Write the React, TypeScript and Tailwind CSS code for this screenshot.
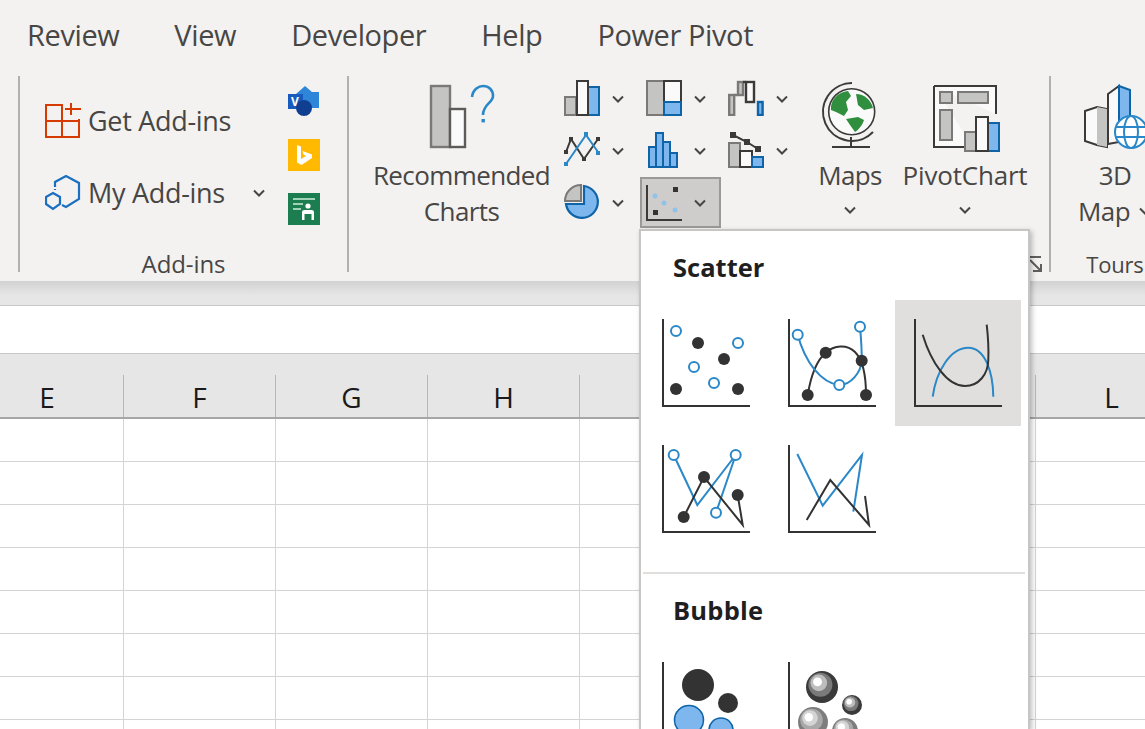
import React from "react";

const BLUE = "#2b88c8";
const DARK = "#333333";
const FILL = "#7db7ee";
const EDGE = "#0f64a8";
const GRAYF = "#c4c4c2";
const GRAYE = "#7a7978";
const INK = "#3b3a39";

function Chevron({ className = "" }: { className?: string }) {
  return (
    <svg width="14" height="9" viewBox="0 0 14 9" className={className}>
      <path d="M2 1.5 L7 6.5 L12 1.5" fill="none" stroke="#484644" strokeWidth="2" />
    </svg>
  );
}

function I36({ children }: { children: React.ReactNode }) {
  return (
    <svg width="36" height="36" viewBox="0 0 36 36" className="shrink-0">
      {children}
    </svg>
  );
}

const R = ({ x, y, w, h, f, s }: { x: number; y: number; w: number; h: number; f: string; s: string }) => (
  <rect x={x} y={y} width={w} height={h} fill={f} stroke={s} strokeWidth="2" />
);

const icons: Record<string, React.ReactNode> = {
  column: (
    <I36>
      <R x={1} y={17} w={11} h={18} f={GRAYF} s={GRAYE} />
      <R x={24} y={7} w={11} h={28} f={FILL} s={EDGE} />
      <R x={13} y={1} w={11} h={34} f="#fafafa" s={INK} />
    </I36>
  ),
  tree: (
    <I36>
      <R x={1} y={1} w={17} h={34} f={GRAYF} s={GRAYE} />
      <R x={18} y={1} w={17} h={22} f="#fafafa" s={INK} />
      <R x={18} y={22} w={17} h={13} f={FILL} s={EDGE} />
    </I36>
  ),
  water: (
    <I36>
      <path d="M6 15 H10" stroke={GRAYE} strokeWidth="2.4" />
      <rect x="1.2" y="15" width="5" height="20" fill={GRAYF} stroke={GRAYE} strokeWidth="2.4" />
      <rect x="10" y="2" width="5" height="13" fill={GRAYF} stroke={GRAYE} strokeWidth="2.4" />
      <path d="M15 2 H18" stroke={INK} strokeWidth="2.4" />
      <rect x="18" y="2" width="8" height="20" fill="#fafafa" stroke={INK} strokeWidth="2.4" />
      <rect x="30" y="22" width="4.6" height="13" fill={FILL} stroke={EDGE} strokeWidth="2.4" />
    </I36>
  ),
  line: (
    <I36>
      <path d="M2 20 L7 7 L20 27 L34 7" fill="none" stroke={INK} strokeWidth="2" />
      <path d="M2 32 L22 3 L34 20" fill="none" stroke={BLUE} strokeWidth="2" />
      <rect x="0" y="18" width="4" height="4" fill={INK} />
      <rect x="5" y="5" width="4" height="4" fill={INK} />
      <rect x="18" y="25" width="4" height="4" fill={INK} />
      <rect x="32" y="5" width="4" height="4" fill={INK} />
      <rect x="0" y="30" width="4" height="4" fill={BLUE} />
      <rect x="20" y="0" width="4" height="4" fill={BLUE} />
      <rect x="32" y="19" width="4" height="4" fill={BLUE} />
    </I36>
  ),
  hist: (
    <I36>
      <R x={3} y={15} w={7} h={20} f={FILL} s={EDGE} />
      <R x={10} y={1} w={7} h={34} f={FILL} s={EDGE} />
      <R x={17} y={10} w={7} h={25} f={FILL} s={EDGE} />
      <R x={24} y={21} w={7} h={14} f={FILL} s={EDGE} />
    </I36>
  ),
  combo: (
    <I36>
      <R x={1} y={11} w={11} h={24} f={GRAYF} s={GRAYE} />
      <R x={12} y={19} w={12} h={16} f="#fafafa" s={INK} />
      <R x={24} y={25} w={11} h={10} f={FILL} s={EDGE} />
      <path d="M5 3 L19 10 L30 17" fill="none" stroke={INK} strokeWidth="2" />
      <rect x="2" y="0" width="6" height="6" fill={INK} />
      <rect x="16" y="7" width="6" height="6" fill={INK} />
      <rect x="27" y="14" width="6" height="6" fill={INK} />
    </I36>
  ),
  pie: (
    <I36>
      <path d="M20 2 A16 16 0 1 1 2 20 H20 Z" fill={FILL} stroke={EDGE} strokeWidth="2.2" />
      <path d="M17 1 A16 16 0 0 0 1 17 H17 Z" fill={GRAYF} stroke={GRAYE} strokeWidth="2" />
    </I36>
  ),
  scatter: (
    <I36>
      <path d="M1 0 V35 H36" fill="none" stroke={INK} strokeWidth="2" />
      <rect x="27" y="2" width="5" height="5" fill={DARK} />
      <rect x="7" y="25" width="5" height="5" fill={DARK} />
      <circle cx="9" cy="11" r="2.5" fill="#8fc3ea" />
      <circle cx="18" cy="18" r="2.5" fill="#8fc3ea" />
      <circle cx="29" cy="25" r="2.5" fill="#8fc3ea" />
    </I36>
  ),
};

const chartRows = [
  ["column", "tree", "water"],
  ["line", "hist", "combo"],
  ["pie", "scatter", ""],
];

function Axis() {
  return <path d="M20 19 V106 H107" fill="none" stroke={DARK} strokeWidth="2" />;
}
const Open = ({ x, y }: { x: number; y: number }) => (
  <circle cx={x} cy={y} r="5" fill="#fff" stroke={BLUE} strokeWidth="2" />
);
const Solid = ({ x, y }: { x: number; y: number }) => <circle cx={x} cy={y} r="6" fill={DARK} />;

function G({ children }: { children: React.ReactNode }) {
  return (
    <svg width="126" height="126" viewBox="0 0 126 126">
      {children}
    </svg>
  );
}

function Sphere({ x, y, r, tone }: { x: number; y: number; r: number; tone: string[] }) {
  return (
    <g>
      <circle cx={x} cy={y} r={r} fill={tone[0]} />
      <circle cx={x - r * 0.1} cy={y - r * 0.14} r={r * 0.75} fill={tone[1]} />
      <circle cx={x - r * 0.2} cy={y - r * 0.26} r={r * 0.52} fill={tone[2]} />
      <circle cx={x - r * 0.28} cy={y - r * 0.32} r={r * 0.28} fill="#ffffff" />
    </g>
  );
}

export default function App() {
  const face = "font-['Open_Sans',sans-serif]";
  return (
    <div className={`relative flex h-[729px] w-[1145px] flex-col overflow-hidden bg-white text-[#484644] ${face}`}>
      {/* Tabs */}
      <div className="flex h-[70px] shrink-0 items-center gap-[55px] bg-[#f3f2f1] pl-[27px] text-[29px] tracking-[-0.4px]">
        <span>Review</span>
        <span>View</span>
        <span>Developer</span>
        <span>Help</span>
        <span>Power Pivot</span>
      </div>

      {/* Ribbon */}
      <div className="flex h-[211px] shrink-0 overflow-hidden bg-[#f3f2f1] pl-[18px] text-[26px] tracking-[-0.6px]">
        <div className="mt-[6px] h-[196px] w-[2px] shrink-0 bg-[#b3b0ad]" />

        {/* Add-ins group */}
        <div className="flex w-[327px] shrink-0 flex-col pt-[2px]">
          <div className="flex h-[178px] pl-[25px]">
            <div className="flex w-[221px] flex-col pt-[13px] text-[27px] tracking-[-0.3px]">
              <div className="flex h-[72px] items-center gap-[7px]">
                <svg width="36" height="36" viewBox="0 0 36 36" className="shrink-0">
                  <path d="M1 2 H17 V34 H1 Z M1 18 H34 V34 H17 M26 0 V12 M20 6 H36 M34 16 V34" fill="none" stroke="#d83b01" strokeWidth="2" />
                </svg>
                <span>Get Add-ins</span>
              </div>
              <div className="flex h-[72px] items-center justify-between">
                <div className="flex items-center gap-[7px]">
                  <svg width="36" height="36" viewBox="0 0 36 36" className="shrink-0">
                    <path d="M10 12 L10 7 L21 1 L34 8 V24 L21 32 L17 30 M10 14 V15" fill="none" stroke="#1a6fc0" strokeWidth="2.2" />
                    <path d="M8 18 L15 22 V29 L8 34 L1 29 V22 Z" fill="none" stroke="#1a6fc0" strokeWidth="2.2" />
                  </svg>
                  <span>My Add-ins</span>
                </div>
                <Chevron />
              </div>
            </div>
            <div className="ml-[22px] flex flex-col gap-[22px] pt-[13px]">
              <svg width="32" height="32" viewBox="0 0 32 32">
                <path d="M8 9 L17 1 L24 7 H31 V23 H20 L8 14 Z" fill="#2f86d8" />
                <path d="M0 9 H15 V24 H0 Z" fill="#185abd" />
                <circle cx="16" cy="23" r="8" fill="#103f91" />
                <text x="3" y="21" fontSize="12" fontWeight="700" fill="#fff" fontFamily="Open Sans, sans-serif">V</text>
              </svg>
              <svg width="32" height="32" viewBox="0 0 32 32">
                <rect width="32" height="32" fill="#ffb900" />
                <path d="M9 6 L13 7.5 V20 L18 17 L15.5 15.5 L14.5 12 L24 15.5 V19 L13.5 26 L9 23.5 Z" fill="#fff" />
              </svg>
              <svg width="32" height="32" viewBox="0 0 32 32">
                <rect width="32" height="32" fill="#1b7d50" />
                <path d="M5 6 H27 M5 11 H15 M5 16 H13" stroke="#9fd3b8" strokeWidth="2" />
                <circle cx="20" cy="13" r="2.6" fill="#fff" />
                <path d="M14 27 V19 Q14 17 16.5 17 H23.5 Q26 17 26 19 V27 H23.5 V21 H16.5 V27 Z" fill="#fff" />
              </svg>
            </div>
          </div>
          <div className="flex h-[28px] items-center justify-center text-[24px] tracking-[-0.1px]">Add-ins</div>
        </div>

        <div className="mt-[6px] h-[196px] w-[2px] shrink-0 bg-[#b3b0ad]" />

        {/* Charts group */}
        <div className="flex w-[700px] shrink-0 flex-col pt-[2px]">
          <div className="flex h-[178px]">
            <div className="ml-[18px] mr-[2px] flex w-[189px] shrink-0 flex-col items-center pt-[12px]">
              <svg width="66" height="66" viewBox="0 0 66 66">
                <rect x="2" y="2" width="19" height="61" fill={GRAYF} stroke={GRAYE} strokeWidth="2.4" />
                <rect x="21" y="25" width="15" height="38" fill="#fafafa" stroke="#5c5b5a" strokeWidth="2.4" />
                <path d="M43 13 C44 5 50 2 54 2 C60 2 64 6 64 12 C64 19 54 20 54 31" fill="none" stroke={BLUE} strokeWidth="2.6" />
                <rect x="52.5" y="35" width="3.4" height="3.4" fill={BLUE} />
              </svg>
              <div className="mt-[7px] flex flex-col items-center leading-[36px]">
                <span>Recommended</span>
                <span>Charts</span>
              </div>
            </div>
            <div className="flex w-[246px] shrink-0 flex-col">
              {chartRows.map((row, i) => (
                <div key={i} className="flex h-[52px]">
                  {row.map((name, j) =>
                    name === "" ? (
                      <div key={j} className="w-[82px]" />
                    ) : (
                      <div
                        key={j}
                        className={
                          name === "scatter"
                            ? "mt-[1px] flex h-[51px] w-[81px] items-center justify-between border-2 border-[#9a9997] bg-[#cfcdcb] pl-[4px] pr-[12px]"
                            : "flex h-[52px] w-[82px] items-center justify-between pl-[6px] pr-[15px]"
                        }
                      >
                        {icons[name]}
                        <Chevron className="mt-[2px]" />
                      </div>
                    )
                  )}
                </div>
              ))}
            </div>
            <div className="flex w-[92px] shrink-0 flex-col items-center pt-[8px]">
              <svg width="60" height="70" viewBox="0 0 60 70">
                <path d="M32 3 A29 29 0 1 0 53 52" fill="none" stroke={INK} strokeWidth="2" />
                <circle cx="31.7" cy="31.7" r="23" fill="#fafafa" stroke={INK} strokeWidth="1.6" />
                <path d="M11 30 C10 20 18 12 28 11 L31 16 L26 22 L28 30 L24 36 L16 32 Z" fill="#2f8f3f" />
                <path d="M36 14 C44 14 51 20 53 28 L44 30 L38 25 Z" fill="#2f8f3f" />
                <path d="M26 39 L38 37 L44 40 C42 46 38 50 35 52 L30 45 Z" fill="#2f8f3f" />
                <path d="M31 57 V67 M12 67 H50" stroke={INK} strokeWidth="2" />
              </svg>
              <span className="mt-[7px] leading-[36px]">Maps</span>
              <Chevron className="mt-[13px]" />
            </div>
            <div className="flex w-[138px] shrink-0 flex-col items-center pt-[12px]">
              <svg width="68" height="68" viewBox="0 0 68 68" className="ml-[4px]">
                <path d="M1 2 H63 V30 M40 63 H1 V2" fill="#fafafa" stroke={INK} strokeWidth="2" />
                <rect x="7" y="8" width="12" height="11" fill={GRAYF} stroke={GRAYE} strokeWidth="2" />
                <rect x="25" y="8" width="30" height="11" fill={GRAYF} stroke={GRAYE} strokeWidth="2" />
                <rect x="7" y="26" width="12" height="30" fill={GRAYF} stroke={GRAYE} strokeWidth="2" />
                <rect x="32" y="48" width="11" height="19" fill={GRAYF} stroke={GRAYE} strokeWidth="2" />
                <rect x="55" y="39" width="11" height="28" fill={FILL} stroke={EDGE} strokeWidth="2" />
                <rect x="43" y="33" width="12" height="34" fill="#fafafa" stroke={INK} strokeWidth="2" />
              </svg>
              <span className="mt-[5px] leading-[36px] tracking-[-0.2px]">PivotChart</span>
              <Chevron className="mt-[13px]" />
            </div>
          </div>
          <div className="flex h-[28px] items-center justify-end pr-[7px]">
            <svg width="13" height="18" viewBox="0 0 13 18">
              <path d="M0 2 H12 M1 5 L11 15 M12 9 V16 H4 M0 8 V11" fill="none" stroke="#605e5c" strokeWidth="2" />
            </svg>
          </div>
        </div>

        <div className="mt-[6px] h-[196px] w-[2px] shrink-0 bg-[#b3b0ad]" />

        {/* Tours group */}
        <div className="flex w-[128px] shrink-0 flex-col pt-[2px]">
          <div className="flex h-[178px] flex-col items-center pt-[12px]">
            <svg width="66" height="66" viewBox="0 0 66 66" className="ml-[2px] shrink-0">
              <path d="M2 27 L14 23 L24 25 V63 L14 61 L2 57 Z" fill="#fafafa" stroke={INK} strokeWidth="2" />
              <path d="M14 23 L24 25 V63 L14 61 Z" fill={GRAYF} />
              <path d="M25 10 L36 2 V58 L25 60 Z" fill="#fafafa" stroke={INK} strokeWidth="2" />
              <path d="M36 2 L47 6 V50 L36 56 Z" fill={FILL} stroke={EDGE} strokeWidth="2" />
              <circle cx="48" cy="48" r="16" fill="#fff" stroke={BLUE} strokeWidth="2" />
              <ellipse cx="48" cy="48" rx="7" ry="16" fill="none" stroke={BLUE} strokeWidth="2" />
              <path d="M33 43 H63 M33 53 H63" stroke={BLUE} strokeWidth="2" />
            </svg>
            <span className="mt-[7px] leading-[36px]">3D</span>
            <div className="flex items-center gap-[8px] leading-[36px]">
              <span>Map</span>
              <Chevron />
            </div>
          </div>
          <div className="flex h-[28px] items-center justify-center text-[22px] tracking-[-0.2px]">Tours</div>
        </div>
      </div>

      {/* Shadow band */}
      <div className="h-[25px] shrink-0 border-b border-[#c8c8c8] bg-gradient-to-b from-[#d2d2d2] to-[#e6e6e6] to-60%" />
      {/* Formula bar */}
      <div className="h-[48px] shrink-0 border-b border-[#c8c8c8] bg-white" />

      {/* Column headers */}
      <div className="flex h-[65px] shrink-0 items-end border-b-2 border-[#a6a6a6] bg-[#e6e6e6] text-[28px] tracking-normal text-[#1a1a1a]">
        {["E", "F", "G", "H", "", "", "", "L"].map((c, i) => (
          <div
            key={i}
            className={`flex h-[42px] shrink-0 items-center justify-center border-r border-[#b8b8b8] pt-[2px] ${
              i === 0 ? "w-[124px] pr-[29px]" : "w-[152px]"
            }`}
          >
            {c}
          </div>
        ))}
      </div>

      {/* Cells */}
      <div className="flex-1 overflow-hidden">
        {[0, 1, 2, 3, 4, 5, 6, 7].map((r) => (
          <div key={r} className="flex h-[43px]">
            {[0, 1, 2, 3, 4, 5, 6, 7].map((c) => (
              <div
                key={c}
                className={`h-[43px] shrink-0 border-b border-r border-[#d4d4d4] ${c === 0 ? "w-[124px]" : "w-[152px]"}`}
              />
            ))}
          </div>
        ))}
      </div>

      {/* Dropdown gallery */}
      <div className="absolute bottom-0 left-[639px] top-[229px] w-[391px] overflow-hidden border-2 border-b-0 border-[#c8c6c4] bg-white shadow-[2px_2px_5px_rgba(0,0,0,0.25)]">
        <div className="flex h-[69px] items-center pl-[32px] pt-[3px] text-[25.5px] font-bold tracking-normal text-[#1f1f1f]">
          Scatter
        </div>
        <div className="grid grid-cols-[126px_126px_126px] pl-[2px]">
          <G>
            <Axis />
            <Open x={33} y={31} />
            <Open x={95} y={43} />
            <Open x={51} y={67} />
            <Open x={71} y={83} />
            <Solid x={55} y={43} />
            <Solid x={81} y={59} />
            <Solid x={33} y={89} />
            <Solid x={95} y={89} />
          </G>
          <G>
            <Axis />
            <path d="M38.7 95 C42 75 48 60 56.7 52.7 C65 45 78 44 86 52 C94 60 97 78 97 95" fill="none" stroke={DARK} strokeWidth="2" />
            <path d="M28.7 34.7 C36 62 52 83 70.3 85 C82 85 92 72 92.7 60.7 C93 50 92 38 91 26.7" fill="none" stroke={BLUE} strokeWidth="2" />
            <Solid x={38.7} y={95} />
            <Solid x={56.7} y={52.7} />
            <Solid x={92.7} y={60.7} />
            <Solid x={97} y={95} />
            <Open x={28.7} y={34.7} />
            <Open x={70.3} y={85} />
            <Open x={91} y={26.7} />
          </G>
          <div className="h-[126px] w-[126px] bg-[#e0dfdd]">
            <G>
              <Axis />
              <path d="M37.7 96.7 C41 72 55 47.7 73.3 47.7 C90 47.7 98 72 98.3 96.7" fill="none" stroke={BLUE} strokeWidth="2" />
              <path d="M27.7 34.7 C36 62 52 86 70 86 C84 86 93 74 93.3 60 C93.8 48 93 36 91.7 24.7" fill="none" stroke={DARK} strokeWidth="2" />
            </G>
          </div>
          <G>
            <Axis />
            <path d="M30.7 29 L54.3 79 L92.7 29 L73 86.7" fill="none" stroke={BLUE} strokeWidth="2" />
            <path d="M40.7 91 L61 51 L99.7 99 L94.7 69" fill="none" stroke={DARK} strokeWidth="2" />
            <Open x={30.7} y={29} />
            <Open x={92.7} y={29} />
            <Open x={73} y={86.7} />
            <Solid x={40.7} y={91} />
            <Solid x={61} y={51} />
            <Solid x={94.7} y={69} />
          </G>
          <G>
            <Axis />
            <path d="M28.3 28 L53.7 79.7 L93 29 L84.3 85.7" fill="none" stroke={BLUE} strokeWidth="2" />
            <path d="M37.7 94 L61.3 54 L100 99 L96 70" fill="none" stroke={DARK} strokeWidth="2" />
          </G>
        </div>
        <div className="ml-[2px] mr-[3px] mt-[20px] h-[2px] bg-[#e1dfdd]" />
        <div className="flex h-[69px] items-center pl-[32px] pt-[3px] text-[25.5px] font-bold tracking-[0.2px] text-[#1f1f1f]">
          Bubble
        </div>
        <div className="grid grid-cols-[126px_126px_126px] pl-[2px]">
          <G>
            <Axis />
            <circle cx="55" cy="42" r="16" fill={DARK} />
            <circle cx="85" cy="60" r="10" fill={DARK} />
            <circle cx="46" cy="77" r="14.5" fill={FILL} stroke={EDGE} strokeWidth="1.6" />
            <circle cx="78" cy="87" r="12" fill={FILL} stroke={EDGE} strokeWidth="1.6" />
          </G>
          <G>
            <Axis />
            <Sphere x={53} y={44} r={16} tone={["#3a3a3a", "#7a7a7a", "#bdbdbd"]} />
            <Sphere x={83} y={62} r={10} tone={["#3a3a3a", "#7a7a7a", "#bdbdbd"]} />
            <Sphere x={44} y={79} r={15} tone={["#7d7d7d", "#a9a9a9", "#d4d4d4"]} />
            <Sphere x={76} y={88} r={13} tone={["#7d7d7d", "#a9a9a9", "#d4d4d4"]} />
          </G>
        </div>
      </div>
    </div>
  );
}
